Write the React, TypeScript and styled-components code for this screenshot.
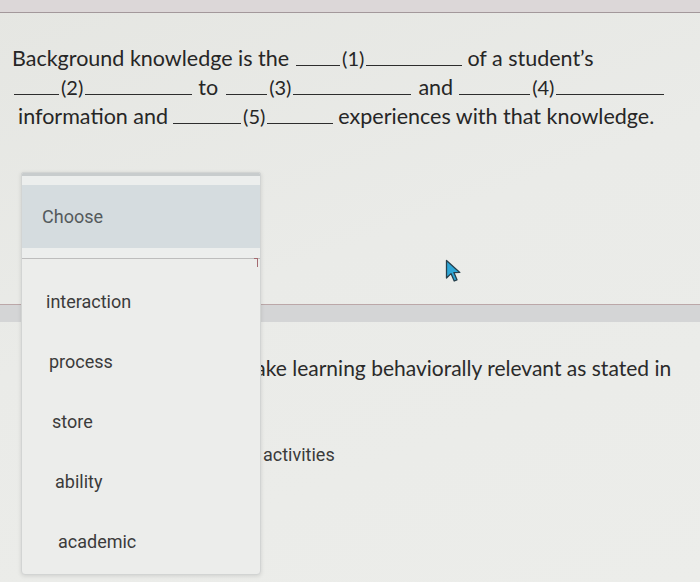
import React from 'react'
import styled, { createGlobalStyle } from 'styled-components'

const GlobalStyle = createGlobalStyle`
  html, body {
    margin: 0;
    padding: 0;
    background: #e8e9e5;
  }
  * {
    box-sizing: border-box;
  }
`

type LineProps = { $indent: number }
type BlankProps = { lead: number; tail: number; label: string }
type GapProps = { $w: number }
type OptionProps = { $i: number }

const options = ['interaction', 'process', 'store', 'ability', 'academic']

const Blank = ({ lead, tail, label }: BlankProps) => (
  <Span_Blank>
    <Span_Rule style={{ width: lead }} />
    <Span_Label>{label}</Span_Label>
    <Span_Rule style={{ width: tail }} />
  </Span_Blank>
)

export default function App() {
  return (
    <>
      <GlobalStyle />
      <Div_Page>
        <Div_TopBand />
        <Section_Question>
          <P_Line $indent={12}>
            <span>Background knowledge is the</span>
            <Span_Gap $w={7} />
            <Blank lead={44} label='(1)' tail={96} />
            <Span_Gap $w={5} />
            <span>of a student’s</span>
          </P_Line>
          <P_Line $indent={14}>
            <Blank lead={45} label='(2)' tail={107} />
            <Span_Gap $w={6} />
            <span>to</span>
            <Span_Gap $w={8} />
            <Blank lead={41} label='(3)' tail={118} />
            <Span_Gap $w={7} />
            <span>and</span>
            <Span_Gap $w={6} />
            <Blank lead={71} label='(4)' tail={108} />
          </P_Line>
          <P_Line $indent={18}>
            <span>information and</span>
            <Span_Gap $w={5} />
            <Blank lead={68} label='(5)' tail={66} />
            <Span_Gap $w={5} />
            <span>experiences with that knowledge.</span>
          </P_Line>
        </Section_Question>

        <Div_Divider />
        <P_Prompt>make learning behaviorally relevant as stated in</P_Prompt>
        <P_Answer>activities</P_Answer>

        <Div_Menu>
          <Div_MenuTop />
          <Div_ChooseRow>Choose</Div_ChooseRow>
          <Div_MenuSeparator />
          <Ul_Options>
            {options.map((o, i) => (
              <Li_Option key={o} $i={i}>
                {o}
              </Li_Option>
            ))}
          </Ul_Options>
        </Div_Menu>

        <Span_Corner />
        <Svg_Cursor viewBox='0 0 16 24' width='16' height='24'>
          <path
            d='M1.5 1.5 L1.5 19 L6 14.6 L9.2 22 L12 20.8 L8.9 13.6 L14.8 13.4 Z'
            fill='#2ea6d6'
            stroke='#26404d'
            strokeWidth='1.3'
            strokeLinejoin='round'
          />
        </Svg_Cursor>
      </Div_Page>
    </>
  )
}

const Div_Page = styled.div`
  position: relative;
  width: 700px;
  height: 582px;
  overflow: hidden;
  background: linear-gradient(160deg, #e5e6e2 0%, #eaebe8 45%, #ecedea 100%);
  font-family: Lato, 'Liberation Sans', sans-serif;
  color: #262626;
`

const Div_TopBand = styled.div`
  height: 13px;
  background: #dcd7d8;
  border-bottom: 1px solid #a3989b;
`

const Section_Question = styled.section`
  padding-top: 31px;
`

const P_Line = styled.p<LineProps>`
  display: flex;
  align-items: baseline;
  margin: 0;
  padding-left: ${p => p.$indent}px;
  height: 29px;
  font-size: 21.5px;
  line-height: 29px;
  white-space: nowrap;
`

const Span_Gap = styled.span<GapProps>`
  display: inline-block;
  width: ${p => p.$w}px;
`

const Span_Blank = styled.span`
  display: inline-flex;
  align-items: baseline;
`

const Span_Rule = styled.span`
  display: inline-block;
  height: 1em;
  border-bottom: 1px solid #2d2d2d;
`

const Span_Label = styled.span`
  padding: 0 2px;
  font-size: 20px;
`

const Div_Divider = styled.div`
  margin-top: 173px;
  height: 18px;
  border-top: 1px solid #bba7a8;
  background: #d4d5d6;
`

const P_Prompt = styled.p`
  margin: 34px 0 0;
  padding-left: 238px;
  font-size: 21px;
  line-height: 24px;
  white-space: nowrap;
  color: #2a2a2a;
`

const P_Answer = styled.p`
  margin: 65px 0 0;
  padding-left: 263px;
  font-family: Roboto, 'Liberation Sans', sans-serif;
  font-size: 18px;
  line-height: 20px;
  color: #3a3a3a;
`

const Div_Menu = styled.div`
  position: absolute;
  left: 21px;
  top: 172px;
  width: 240px;
  height: 403px;
  background: #ecedeb;
  border: 1px solid #d2d4d3;
  border-radius: 2px 2px 4px 4px;
  box-shadow: 0 1px 4px rgba(0, 0, 0, 0.12);
  font-family: Roboto, 'Liberation Sans', sans-serif;
  font-size: 18px;
  overflow: hidden;
`

const Div_MenuTop = styled.div`
  height: 12px;
  border-top: 3px solid #c8cccd;
  background: #eceeed;
`

const Div_ChooseRow = styled.div`
  display: flex;
  align-items: center;
  height: 63px;
  padding-left: 20px;
  background: #d5dcdf;
  color: #545a5c;
`

const Div_MenuSeparator = styled.div`
  height: 11px;
  border-bottom: 1px solid #bdbdbd;
  background: #eceeed;
`

const Ul_Options = styled.ul`
  list-style: none;
  margin: 0;
  padding: 12px 0 0;
`

const Li_Option = styled.li<OptionProps>`
  display: flex;
  align-items: center;
  height: 60px;
  padding-left: ${p => 24 + p.$i * 3}px;
  color: #3b3b3b;
`

const Span_Corner = styled.span`
  position: absolute;
  left: 254px;
  top: 258px;
  width: 4px;
  height: 9px;
  border-top: 1px solid #a46a70;
  border-right: 1px solid #a46a70;
`

const Svg_Cursor = styled.svg`
  position: absolute;
  left: 445px;
  top: 259px;
`
